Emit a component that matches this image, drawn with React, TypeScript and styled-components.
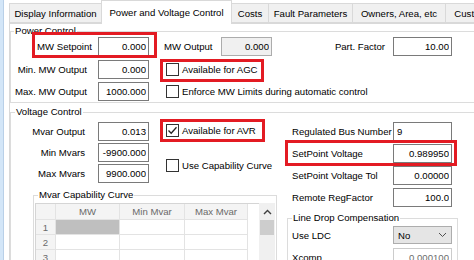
import React from 'react';
import styled, { createGlobalStyle } from 'styled-components';

const GlobalStyle = createGlobalStyle`
  html, body {
    margin: 0;
    padding: 0;
    background: #ffffff;
  }
  body {
    font-family: 'Liberation Sans', Arial, sans-serif;
    font-size: 9.6px;
    color: #000000;
  }
`;

const Screen = styled.div`
  position: relative;
  width: 474px;
  height: 260px;
  overflow: hidden;
  display: flex;
  background: #ffffff;
`;

const Rail = styled.div`
  flex: none;
  width: 3px;
  background: #d3e6f8;
  border-right: 1px solid #b9d0e8;
`;

const Main = styled.div`
  flex: 1;
  min-width: 0;
  margin-left: 5px;
  display: flex;
  flex-direction: column;
`;

const TabStrip = styled.div`
  flex: none;
  height: 23px;
  display: flex;
  align-items: flex-end;
`;

const Tab = styled.div<{ $w: number; $active?: boolean }>`
  flex: none;
  box-sizing: border-box;
  width: ${(p) => p.$w}px;
  height: ${(p) => (p.$active ? 24 : 20)}px;
  margin-bottom: ${(p) => (p.$active ? -1 : 0)}px;
  margin-left: -1px;
  position: relative;
  z-index: ${(p) => (p.$active ? 2 : 1)};
  display: flex;
  align-items: center;
  justify-content: center;
  white-space: nowrap;
  background: ${(p) => (p.$active ? '#ffffff' : '#f0f0f0')};
  border: 1px solid #d9d9d9;
  border-bottom: ${(p) => (p.$active ? 'none' : '1px solid #d9d9d9')};
  &:first-child {
    margin-left: 0;
  }
`;

const Panel = styled.div`
  flex: 1;
  border-top: 1px solid #d9d9d9;
  border-left: 1px solid #d9d9d9;
  background: #ffffff;
`;

const GroupBox = styled.div<{ $mt: number; $ml?: number; $w?: number; $mr?: number }>`
  position: relative;
  box-sizing: border-box;
  margin-top: ${(p) => p.$mt}px;
  margin-left: ${(p) => p.$ml ?? 0}px;
  margin-right: ${(p) => p.$mr ?? 0}px;
  width: ${(p) => (p.$w ? `${p.$w}px` : 'auto')};
  border: 1px solid #dcdcdc;
`;

const Caption = styled.span<{ $left: number }>`
  position: absolute;
  top: -7px;
  left: ${(p) => p.$left}px;
  padding: 0 1px;
  line-height: 12px;
  background: #ffffff;
  white-space: nowrap;
`;

const PowerGrid = styled.div`
  display: grid;
  grid-template-columns: 87px 51px 72px 51px 121px 59px;
  grid-template-rows: 23px 23px 21px;
  padding-top: 3px;
  align-items: center;
`;

const FieldLabel = styled.span<{ $pr?: number; $pl?: number; $right?: boolean }>`
  white-space: nowrap;
  text-align: ${(p) => (p.$right ? 'right' : 'left')};
  padding-right: ${(p) => p.$pr ?? 0}px;
  padding-left: ${(p) => p.$pl ?? 0}px;
`;

const Field = styled.input<{ $disabled?: boolean; $left?: boolean }>`
  box-sizing: border-box;
  width: 100%;
  height: 19px;
  margin: 0;
  padding: 0 2px 0 3px;
  font: inherit;
  text-align: ${(p) => (p.$left ? 'left' : 'right')};
  color: #000000;
  background: ${(p) => (p.$disabled ? '#f0f0f0' : '#ffffff')};
  border: 1px solid ${(p) => (p.$disabled ? '#acacac' : '#7a7a7a')};
  border-radius: 0;
  outline: none;
`;

const FaintField = styled(Field)`
  background: #ffffff;
  border-color: #cccccc;
  color: #6d6d6d;
`;

const CheckRow = styled.label<{ $span?: boolean }>`
  display: flex;
  align-items: center;
  gap: 3px;
  height: 20px;
  white-space: nowrap;
  grid-column: ${(p) => (p.$span ? '3 / -1' : 'auto')};
  padding-left: ${(p) => (p.$span ? 17 : 0)}px;
`;

const Box = styled.span`
  flex: none;
  box-sizing: border-box;
  width: 13px;
  height: 13px;
  border: 1px solid #333333;
  background: #ffffff;
  display: flex;
  align-items: center;
  justify-content: center;
`;

const VoltageBody = styled.div`
  display: flex;
  padding-top: 7px;
`;

const LeftPart = styled.div`
  flex: none;
  width: 276px;
  display: flex;
  flex-direction: column;
`;

const TopLeft = styled.div`
  display: flex;
`;

const VoltGrid = styled.div`
  display: grid;
  grid-template-columns: 87px 51px;
  grid-template-rows: 22px 21px 21px;
  align-items: center;
`;

const CheckColumn = styled.div`
  display: flex;
  flex-direction: column;
  gap: 15px;
  padding-left: 17px;
`;

const CurveBody = styled.div`
  display: flex;
  padding: 7px 0 0 1px;
  height: 60px;
`;

const Table = styled.div`
  flex: none;
  width: 224px;
  display: grid;
  grid-template-columns: 20px 64px 65px 63px 12px;
  grid-template-rows: 16px 15px 15px 15px;
  border-top: 1px solid #d5d5d5;
  border-left: 1px solid #d5d5d5;
  box-sizing: border-box;
`;

const Cell = styled.div<{ $head?: boolean; $selected?: boolean; $blank?: boolean }>`
  box-sizing: border-box;
  display: flex;
  align-items: center;
  justify-content: center;
  color: ${(p) => (p.$head ? '#6a6a6a' : '#444444')};
  background: ${(p) =>
    p.$selected ? '#bfbfbf' : p.$blank ? '#ffffff' : p.$head ? '#f4f4f4' : '#ffffff'};
  border-right: ${(p) => (p.$blank ? 'none' : '1px solid #e3e3e3')};
  border-bottom: ${(p) => (p.$blank ? 'none' : '1px solid #e3e3e3')};
`;

const ScrollBar = styled.div`
  flex: none;
  width: 16px;
  display: flex;
  flex-direction: column;
  align-items: center;
  background: #f0f0f0;
`;

const ScrollArrow = styled.div`
  height: 17px;
  display: flex;
  align-items: center;
  justify-content: center;
`;

const Thumb = styled.div`
  width: 14px;
  height: 15px;
  background: #cdcdcd;
`;

const RightPart = styled.div`
  flex: 1;
  display: flex;
  flex-direction: column;
`;

const RightRow = styled.div`
  display: flex;
  align-items: center;
  height: 22px;
  padding-left: 5px;
`;

const RowLabel = styled.span<{ $w: number }>`
  flex: none;
  width: ${(p) => p.$w}px;
  white-space: nowrap;
`;

const RowInput = styled.div`
  flex: none;
  width: 59px;
`;

const LdcBody = styled.div`
  display: flex;
  flex-direction: column;
  gap: 2px;
  padding: 6px 0 0 4px;
`;

const LdcRow = styled.div`
  display: flex;
  align-items: center;
  height: 20px;
`;

const Select = styled.div`
  flex: none;
  box-sizing: border-box;
  width: 59px;
  height: 18px;
  padding: 0 4px;
  display: flex;
  align-items: center;
  justify-content: space-between;
  background: #e5e5e5;
  border: 1px solid #adadad;
`;

const Highlight = styled.div<{ $x: number; $y: number; $w: number; $h: number }>`
  position: absolute;
  left: ${(p) => p.$x}px;
  top: ${(p) => p.$y}px;
  width: ${(p) => p.$w}px;
  height: ${(p) => p.$h}px;
  box-sizing: border-box;
  border: 3px solid #e31b23;
  pointer-events: none;
  z-index: 5;
`;

const tabs = [
  { label: 'Display Information', w: 93 },
  { label: 'Power and Voltage Control', w: 131, active: true },
  { label: 'Costs', w: 38 },
  { label: 'Fault Parameters', w: 85 },
  { label: 'Owners, Area, etc', w: 94 },
  { label: 'Custom Fields', w: 80 },
];

function Check({ checked, label, span }: { checked?: boolean; label: string; span?: boolean }) {
  return (
    <CheckRow $span={span}>
      <Box>
        {checked && (
          <svg width="11" height="11" viewBox="0 0 11 11">
            <path d="M1.5 5.5 L4.2 8.3 L9.5 2.2" fill="none" stroke="#222" strokeWidth="1.3" />
          </svg>
        )}
      </Box>
      <span>{label}</span>
    </CheckRow>
  );
}

export default function App() {
  return (
    <>
      <GlobalStyle />
      <Screen>
        <Rail />
        <Main>
          <TabStrip>
            {tabs.map((t) => (
              <Tab key={t.label} $w={t.w} $active={t.active}>
                {t.label}
              </Tab>
            ))}
          </TabStrip>
          <Panel>
            <GroupBox $mt={7} $mr={-40}>
              <Caption $left={3}>Power Control</Caption>
              <PowerGrid>
                <FieldLabel $right $pr={6}>MW Setpoint</FieldLabel>
                <Field readOnly value="0.000" />
                <FieldLabel $pl={15}>MW Output</FieldLabel>
                <Field readOnly $disabled value="0.000" />
                <FieldLabel $right $pr={8}>Part. Factor</FieldLabel>
                <Field readOnly value="10.00" />

                <FieldLabel $right $pr={11}>Min. MW Output</FieldLabel>
                <Field readOnly value="0.000" />
                <Check span label="Available for AGC" />

                <FieldLabel $right $pr={11}>Max. MW Output</FieldLabel>
                <Field readOnly value="1000.000" />
                <Check span label="Enforce MW Limits during automatic control" />
              </PowerGrid>
            </GroupBox>

            <GroupBox $mt={9} $mr={-40}>
              <Caption $left={4}>Voltage Control</Caption>
              <VoltageBody>
                <LeftPart>
                  <TopLeft>
                    <VoltGrid>
                      <FieldLabel $right $pr={13}>Mvar Output</FieldLabel>
                      <Field readOnly value="0.013" />
                      <FieldLabel $right $pr={13}>Min Mvars</FieldLabel>
                      <Field readOnly value="-9900.000" />
                      <FieldLabel $right $pr={13}>Max Mvars</FieldLabel>
                      <Field readOnly value="9900.000" />
                    </VoltGrid>
                    <CheckColumn>
                      <Check checked label="Available for AVR" />
                      <Check label="Use Capability Curve" />
                    </CheckColumn>
                  </TopLeft>

                  <GroupBox $mt={11} $ml={22} $w={244}>
                    <Caption $left={4}>Mvar Capability Curve</Caption>
                    <CurveBody>
                      <Table>
                        <Cell $head />
                        <Cell $head>MW</Cell>
                        <Cell $head>Min Mvar</Cell>
                        <Cell $head>Max Mvar</Cell>
                        <Cell $blank />
                        {[1, 2, 3].map((n) => (
                          <React.Fragment key={n}>
                            <Cell $head>{n}</Cell>
                            <Cell $selected={n === 1} />
                            <Cell />
                            <Cell />
                            <Cell $blank />
                          </React.Fragment>
                        ))}
                      </Table>
                      <ScrollBar>
                        <ScrollArrow>
                          <svg width="9" height="6" viewBox="0 0 9 6">
                            <path d="M1 5 L4.5 1.5 L8 5" fill="none" stroke="#404040" strokeWidth="1.4" />
                          </svg>
                        </ScrollArrow>
                        <Thumb />
                      </ScrollBar>
                    </CurveBody>
                  </GroupBox>
                </LeftPart>

                <RightPart>
                  <RightRow>
                    <RowLabel $w={101}>Regulated Bus Number</RowLabel>
                    <RowInput>
                      <Field readOnly $left value="9" />
                    </RowInput>
                  </RightRow>
                  <RightRow>
                    <RowLabel $w={101}>SetPoint Voltage</RowLabel>
                    <RowInput>
                      <Field readOnly value="0.989950" />
                    </RowInput>
                  </RightRow>
                  <RightRow>
                    <RowLabel $w={101}>SetPoint Voltage Tol</RowLabel>
                    <RowInput>
                      <Field readOnly value="0.00000" />
                    </RowInput>
                  </RightRow>
                  <RightRow>
                    <RowLabel $w={101}>Remote RegFactor</RowLabel>
                    <RowInput>
                      <Field readOnly value="100.0" />
                    </RowInput>
                  </RightRow>

                  <GroupBox $mt={10} $w={171}>
                    <Caption $left={4}>Line Drop Compensation</Caption>
                    <LdcBody>
                      <LdcRow>
                        <RowLabel $w={101}>Use LDC</RowLabel>
                        <Select>
                          <span>No</span>
                          <svg width="9" height="6" viewBox="0 0 9 6">
                            <path d="M1 1 L4.5 4.5 L8 1" fill="none" stroke="#505050" strokeWidth="1" />
                          </svg>
                        </Select>
                      </LdcRow>
                      <LdcRow>
                        <RowLabel $w={101}>Xcomp</RowLabel>
                        <RowInput>
                          <FaintField readOnly value="0.000100" />
                        </RowInput>
                      </LdcRow>
                    </LdcBody>
                  </GroupBox>
                </RightPart>
              </VoltageBody>
            </GroupBox>
          </Panel>
        </Main>

        <Highlight $x={32} $y={32} $w={125} $h={26} />
        <Highlight $x={160} $y={59} $w={104} $h={23} />
        <Highlight $x={160} $y={119} $w={105} $h={23} />
        <Highlight $x={285} $y={140} $w={172} $h={26} />
      </Screen>
    </>
  );
}
